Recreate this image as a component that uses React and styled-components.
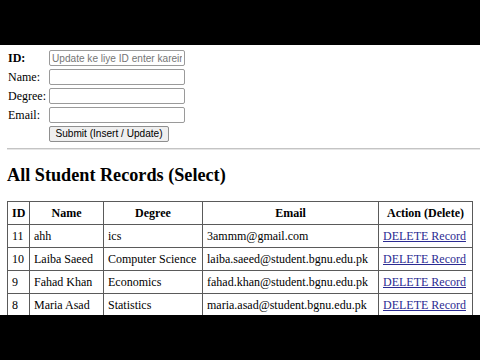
import React from "react";
import styled, { createGlobalStyle } from "styled-components";

const Global = createGlobalStyle`
  html, body { margin: 0; padding: 0; background: #000; }
  body { font-family: "Liberation Serif", "Times New Roman", serif; font-size: 12px; color: #000; }
`;

const Screen = styled.div`
  width: 480px;
  height: 360px;
  background: #000;
  display: flex;
  flex-direction: column;
  padding-top: 45px;
  box-sizing: border-box;
`;

const Page = styled.div`
  height: 270px;
  background: #fff;
  overflow: hidden;
  padding: 5px 0 0 7px;
  box-sizing: border-box;
`;

const Form = styled.form`
  display: grid;
  grid-template-columns: 42px 136px;
  row-gap: 3px;
  align-items: center;
  margin: 0;
`;

const Label = styled.label`
  padding-left: 1px;
  font-weight: ${(p) => (p.$bold ? "bold" : "normal")};
  font-size: 12px;
  line-height: 16px;
  white-space: nowrap;
`;

const Input = styled.input`
  width: 136px;
  height: 16px;
  box-sizing: border-box;
  border: 1px solid #9a9a9a;
  border-radius: 2px;
  padding: 0 2px;
  font-family: "Liberation Sans", Arial, sans-serif;
  font-size: 10.1px;
  color: #000;
  background: #fff;
  outline: none;
  &::placeholder { color: #757575; }
`;

const Button = styled.button`
  grid-column: 2;
  justify-self: start;
  width: 120px;
  height: 16px;
  box-sizing: border-box;
  border: 1px solid #8f8f8f;
  border-radius: 2px;
  background: #efefef;
  font-family: "Liberation Sans", Arial, sans-serif;
  font-size: 10.1px;
  color: #000;
  padding: 0;
  line-height: 14px;
`;

const Rule = styled.hr`
  margin: 6px 0 0 0;
  border: none;
  border-top: 1px solid #c4c4c4;
  border-bottom: 1px solid #e6e6e6;
  height: 0;
`;

const Heading = styled.h2`
  font-size: 18.2px;
  font-weight: bold;
  line-height: 22px;
  margin: 14px 0 0 0;
`;

const Table = styled.table`
  margin-top: 15px;
  border-collapse: collapse;
  table-layout: fixed;
  width: 465px;
  font-size: 12px;
`;

const Th = styled.th`
  border: 1px solid #5a5a5a;
  height: 22px;
  padding: 0 4px;
  font-weight: bold;
  text-align: center;
  white-space: nowrap;
`;

const Td = styled.td`
  border: 1px solid #5a5a5a;
  height: 22px;
  padding: 0 4px;
  text-align: left;
  white-space: nowrap;
  overflow: hidden;
`;

const DeleteLink = styled.a`
  color: #2b2b92;
  text-decoration: underline;
`;

const rows = [
  { id: 11, name: "ahh", degree: "ics", email: "3ammm@gmail.com" },
  { id: 10, name: "Laiba Saeed", degree: "Computer Science", email: "laiba.saeed@student.bgnu.edu.pk" },
  { id: 9, name: "Fahad Khan", degree: "Economics", email: "fahad.khan@student.bgnu.edu.pk" },
  { id: 8, name: "Maria Asad", degree: "Statistics", email: "maria.asad@student.bgnu.edu.pk" },
];

export default function App() {
  return (
    <>
      <Global />
      <Screen>
        <Page>
          <Form onSubmit={(e) => e.preventDefault()}>
            <Label $bold>ID:</Label>
            <Input placeholder="Update ke liye ID enter karein" />
            <Label>Name:</Label>
            <Input />
            <Label>Degree:</Label>
            <Input />
            <Label>Email:</Label>
            <Input />
            <Button type="submit">Submit (Insert / Update)</Button>
          </Form>
          <Rule />
          <Heading>All Student Records (Select)</Heading>
          <Table>
            <colgroup>
              <col style={{ width: 22 }} />
              <col style={{ width: 74 }} />
              <col style={{ width: 99 }} />
              <col style={{ width: 176 }} />
              <col style={{ width: 94 }} />
            </colgroup>
            <thead>
              <tr>
                <Th>ID</Th>
                <Th>Name</Th>
                <Th>Degree</Th>
                <Th>Email</Th>
                <Th>Action (Delete)</Th>
              </tr>
            </thead>
            <tbody>
              {rows.map((r) => (
                <tr key={r.id}>
                  <Td>{r.id}</Td>
                  <Td>{r.name}</Td>
                  <Td>{r.degree}</Td>
                  <Td>{r.email}</Td>
                  <Td>
                    <DeleteLink href="#">DELETE Record</DeleteLink>
                  </Td>
                </tr>
              ))}
            </tbody>
          </Table>
        </Page>
      </Screen>
    </>
  );
}
